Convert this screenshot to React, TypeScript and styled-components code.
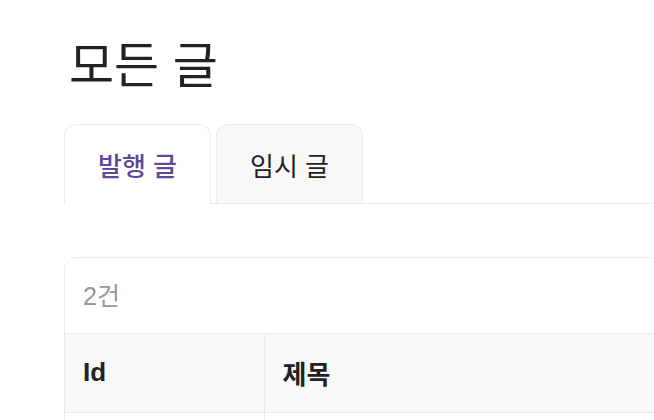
import React from 'react'
import styled, { createGlobalStyle, css } from 'styled-components'

const GlobalStyle = createGlobalStyle`
  html, body {
    margin: 0;
    padding: 0;
    background: #fff;
    overflow: hidden;
  }
  body {
    font-family: 'Liberation Sans', 'Noto Sans CJK KR', sans-serif;
    color: #222;
  }
`

const borderColor = '#ebebeb'

const Page = styled.main`
  width: 1100px;
  padding: 0 0 0 64px;
  box-sizing: border-box;
`

const Title = styled.h1`
  margin: 0 0 0 5px;
  padding-top: 34px;
  font-size: 49px;
  line-height: 64px;
  font-weight: 400;
  color: #222;
`

const TabBar = styled.div`
  display: flex;
  gap: 5px;
  margin-top: 26px;
  border-bottom: 1px solid ${borderColor};
`

const Tab = styled.button<{ $active?: boolean }>`
  width: 147px;
  height: 79px;
  box-sizing: border-box;
  border: 1px solid ${borderColor};
  border-bottom: none;
  border-radius: 12px 12px 0 0;
  background: #f8f8f8;
  color: #222;
  font-family: inherit;
  font-size: 26px;
  cursor: pointer;
  padding: 0;
  ${(p) =>
    p.$active &&
    css`
      background: #fff;
      color: #5b4a9c;
      font-weight: 500;
      margin-bottom: -1px;
      height: 80px;
    `}
`

const Card = styled.section`
  margin-top: 53px;
  border: 1px solid ${borderColor};
  border-radius: 12px;
  overflow: hidden;
`

const Count = styled.div`
  height: 76px;
  display: flex;
  align-items: center;
  padding: 0 18px 4px;
  box-sizing: border-box;
  font-size: 25px;
  color: #999;
  border-bottom: 1px solid ${borderColor};
`

const Table = styled.table`
  width: 100%;
  border-collapse: collapse;
`

const HeadCell = styled.th<{ $width?: number }>`
  height: 78px;
  padding: 0 18px;
  text-align: left;
  font-size: 26px;
  font-weight: 700;
  color: #222;
  background: #f9f9f9;
  border-right: 1px solid ${borderColor};
  border-bottom: 1px solid ${borderColor};
  width: ${(p) => (p.$width ? `${p.$width}px` : 'auto')};
  box-sizing: border-box;
`

const Cell = styled.td`
  height: 77px;
  padding: 0 18px;
  font-size: 24px;
  border-right: 1px solid ${borderColor};
  border-bottom: 1px solid ${borderColor};
`

const posts = [
  { id: 2, title: '두 번째 글' },
  { id: 1, title: '첫 번째 글' },
]

export default function App() {
  return (
    <>
      <GlobalStyle />
      <Page>
        <Title>모든 글</Title>
        <TabBar>
          <Tab $active>발행 글</Tab>
          <Tab>임시 글</Tab>
        </TabBar>
        <Card>
          <Count>{posts.length}건</Count>
          <Table>
            <thead>
              <tr>
                <HeadCell $width={199}>Id</HeadCell>
                <HeadCell>제목</HeadCell>
              </tr>
            </thead>
            <tbody>
              {posts.map((post) => (
                <tr key={post.id}>
                  <Cell>{post.id}</Cell>
                  <Cell>{post.title}</Cell>
                </tr>
              ))}
            </tbody>
          </Table>
        </Card>
      </Page>
    </>
  )
}
